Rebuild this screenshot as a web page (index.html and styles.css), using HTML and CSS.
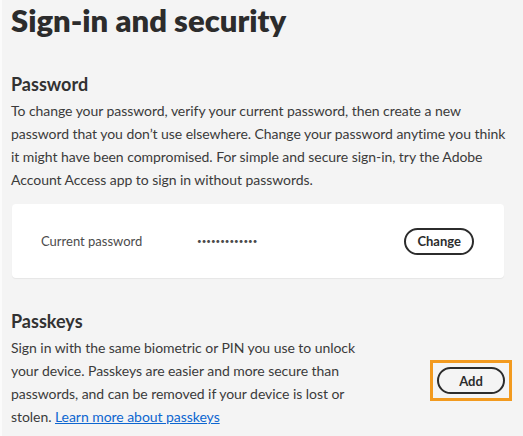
FILE: index.html
```html
<!DOCTYPE html>
<html lang="en">
<head>
    <meta charset="UTF-8">
    <meta name="viewport" content="width=device-width, initial-scale=1.0">
    <title>Sign-in and security</title>
    <link rel="stylesheet" href="styles.css">
</head>
<body>
    <div class="page">
        <h1 class="title">Sign-in and security</h1>

        <section class="section">
            <h2 class="section-title">Password</h2>
            <p class="text">To change your password, verify your current password, then create a new password that you don’t use elsewhere. Change your password anytime you think it might have been compromised. For simple and secure sign-in, try the Adobe Account Access app to sign in without passwords.</p>
            <div class="card">
                <span class="label">Current password</span>
                <span class="dots">•••••••••••••</span>
                <button class="pill-btn">Change</button>
            </div>
        </section>

        <section class="section passkeys">
            <h2 class="section-title">Passkeys</h2>
            <div class="row">
                <p class="text narrow">Sign in with the same biometric or PIN you use to unlock your device. Passkeys are easier and more secure than passwords, and can be removed if your device is lost or stolen. <a href="#" class="link">Learn more about passkeys</a></p>
                <span class="focus-ring"><button class="pill-btn add-btn">Add</button></span>
            </div>
        </section>
    </div>
</body>
</html>
```

FILE: styles.css
```css
body {
    margin: 0;
    background-color: #f4f4f4;
    font-family: Lato, "Noto Sans", sans-serif;
    color: #3b3b3b;
}

.page {
    border-left: 2px solid #fbfbfb;
    padding: 0 11px 0 9px;
    min-height: 436px;
}

.title {
    margin: 0;
    font-size: 31px;
    line-height: 40px;
    font-weight: 800;
    color: #2c2c2c;
}

.section {
    margin-top: 32px;
}

.section-title {
    margin: 0;
    font-size: 18px;
    line-height: 24px;
    font-weight: 700;
    color: #323232;
}

.text {
    margin: 3px 0 0;
    font-size: 14px;
    line-height: 23px;
    letter-spacing: -0.05px;
}

.card {
    display: flex;
    align-items: center;
    margin: 13px 8px 0 1px;
    height: 74px;
    box-sizing: border-box;
    padding: 0 30px 0 29px;
    background: #fff;
    border-radius: 4px;
    box-shadow: 0 1px 1px rgba(0, 0, 0, 0.06);
}

.label {
    width: 156px;
    font-size: 13px;
    color: #4b4b4b;
}

.dots {
    font-size: 8px;
    color: #4b4b4b;
}

.pill-btn {
    margin-left: auto;
    height: 27px;
    padding: 0 11px;
    border: 2px solid #2c2c2c;
    border-radius: 14px;
    background: #fff;
    font-family: inherit;
    font-size: 13px;
    font-weight: 700;
    color: #2c2c2c;
    cursor: pointer;
}

.passkeys {
    margin-top: 31px;
}

.row {
    display: flex;
    align-items: center;
}

.narrow {
    max-width: 365px;
}

.link {
    color: #0d66d0;
}

.focus-ring {
    margin-left: auto;
    padding: 4px;
    border: 3px solid #f29a1f;
    display: flex;
}

.add-btn {
    width: 68px;
    background: transparent;
}
```
